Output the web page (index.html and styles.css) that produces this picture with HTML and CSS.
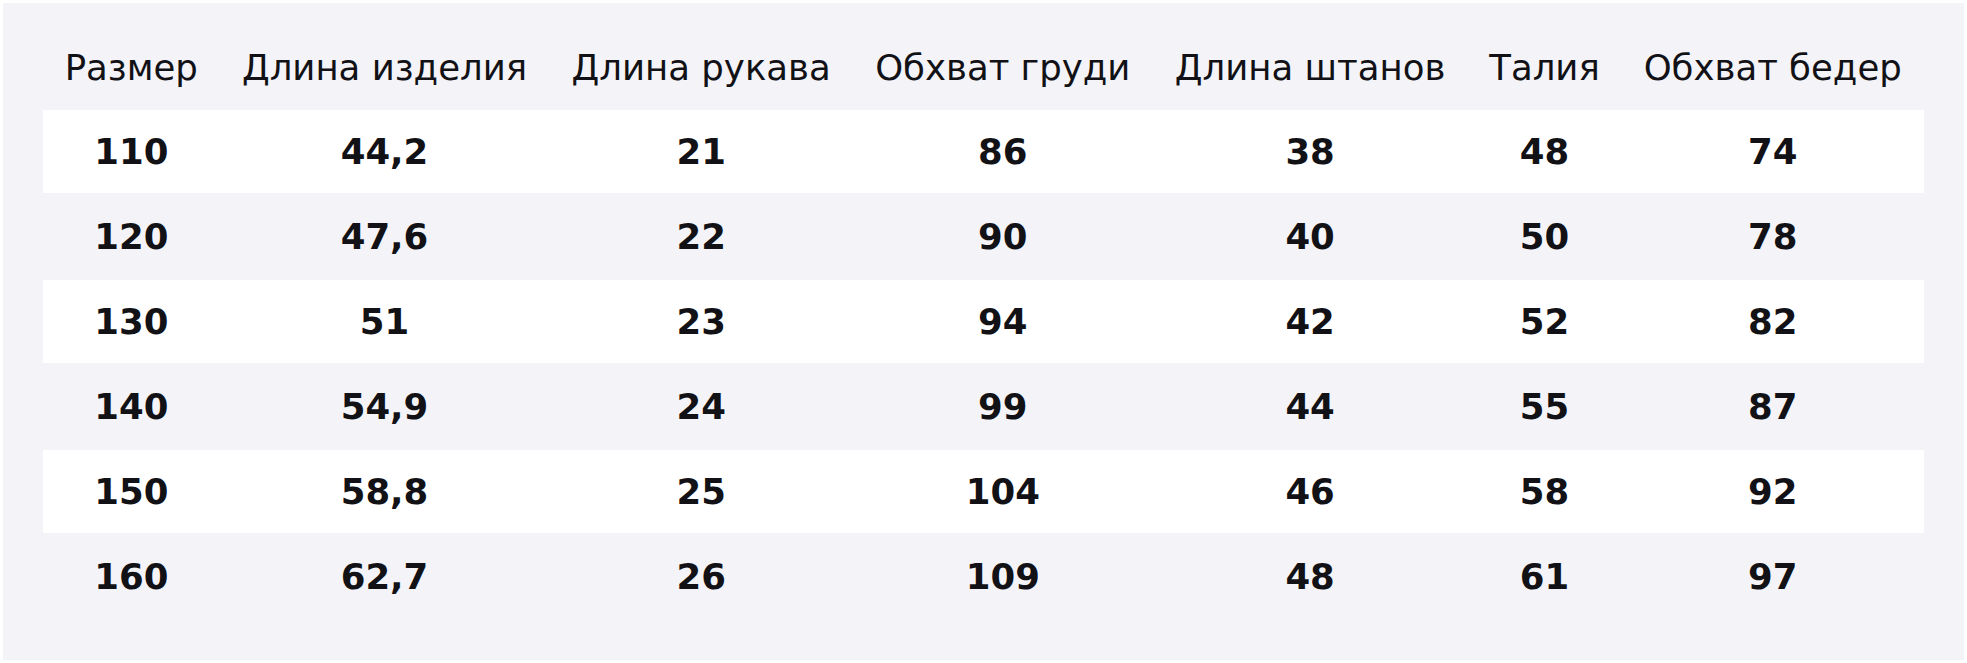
FILE: index.html
```html
<!DOCTYPE html>
<html lang="ru">
<head>
<meta charset="utf-8">
<link rel="stylesheet" href="styles.css">
</head>
<body>
<div class="page">
  <div class="card">
    <table class="sizes">
      <thead>
        <tr>
          <th>Размер</th>
          <th>Длина изделия</th>
          <th>Длина рукава</th>
          <th>Обхват груди</th>
          <th>Длина штанов</th>
          <th>Талия</th>
          <th>Обхват бедер</th>
        </tr>
      </thead>
      <tbody>
        <tr><td>110</td><td>44,2</td><td>21</td><td>86</td><td>38</td><td>48</td><td>74</td></tr>
        <tr><td>120</td><td>47,6</td><td>22</td><td>90</td><td>40</td><td>50</td><td>78</td></tr>
        <tr><td>130</td><td>51</td><td>23</td><td>94</td><td>42</td><td>52</td><td>82</td></tr>
        <tr><td>140</td><td>54,9</td><td>24</td><td>99</td><td>44</td><td>55</td><td>87</td></tr>
        <tr><td>150</td><td>58,8</td><td>25</td><td>104</td><td>46</td><td>58</td><td>92</td></tr>
        <tr><td>160</td><td>62,7</td><td>26</td><td>109</td><td>48</td><td>61</td><td>97</td></tr>
      </tbody>
    </table>
  </div>
</div>
</body>
</html>
```

FILE: styles.css
```css
html, body {
  margin: 0;
  padding: 0;
  background: #ffffff;
}

.page {
  padding: 3px;
}

.card {
  background: #f4f4f8;
  padding: 40px;
}

.sizes {
  width: 100%;
  border-collapse: separate;
  border-spacing: 0 2px;
  font-family: "DejaVu Sans", sans-serif;
  font-size: 35.5px;
  color: #111116;
}

.sizes th {
  font-weight: normal;
  white-space: nowrap;
  height: 63px;
  box-sizing: border-box;
  padding: 1px 21px 20px;
  text-align: center;
}

.sizes td {
  font-weight: bold;
  text-align: center;
  height: 83px;
  padding: 0 21px;
  box-sizing: border-box;
}

.sizes tbody tr:nth-child(odd) td {
  background: #ffffff;
}
```
